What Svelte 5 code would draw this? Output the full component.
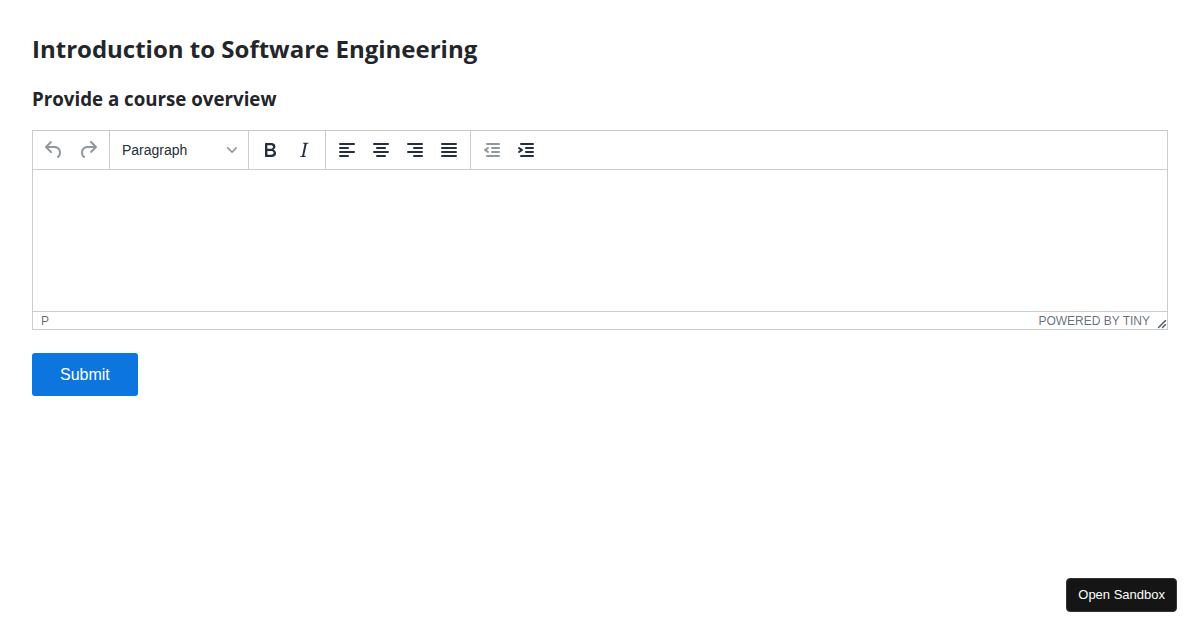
<script>
  const bar = (x, y, w) => `M${x} ${y}h${w}a1 1 0 0 1 0 2H${x}a1 1 0 1 1 0-2z`;
  const icons = {
    undo: 'M6.4 8H12c3.7 0 6.2 2 6.8 5.1.6 2.7-.4 5.6-2.3 6.8a1 1 0 0 1-1-1.8c1.1-.6 1.8-2.7 1.4-4.6-.5-2.1-2.1-3.5-4.9-3.5H6.4l3.3 3.3a1 1 0 1 1-1.4 1.4l-5-5a1 1 0 0 1 0-1.4l5-5a1 1 0 0 1 1.4 1.4L6.4 8z',
    redo: 'M17.6 10H12c-2.8 0-4.4 1.4-4.9 3.5-.4 2 .3 4 1.4 4.6a1 1 0 1 1-1 1.8c-2-1.2-2.9-4.1-2.3-6.8.6-3 3-5.1 6.8-5.1h5.6l-3.3-3.3a1 1 0 1 1 1.4-1.4l5 5a1 1 0 0 1 0 1.4l-5 5a1 1 0 0 1-1.4-1.4l3.3-3.3z',
    bold: 'M7.8 19c-.3 0-.5 0-.6-.2l-.2-.5V5.7c0-.2 0-.4.2-.5l.6-.2h5c1.5 0 2.7.3 3.5 1 .7.6 1.1 1.4 1.1 2.5a3 3 0 0 1-.6 1.9c-.4.6-1 1-1.6 1.2.4.1.9.3 1.3.6s.8.7 1 1.2c.4.4.5 1 .5 1.6 0 1.3-.4 2.3-1.3 3-.8.7-2.1 1-3.8 1H7.8zm5-8.3c.6 0 1.2-.1 1.6-.5.4-.3.6-.7.6-1.3 0-1.1-.8-1.7-2.3-1.7H9.3v3.5h3.4zm.5 6c.7 0 1.3-.1 1.7-.4.4-.4.6-.9.6-1.5s-.2-1-.7-1.4c-.4-.3-1-.4-2-.4H9.4v3.8h4z',
    italic: 'M16.7 4.7l-.1.9h-.3c-.6 0-1 0-1.4.3-.3.3-.4.6-.5 1.1l-2.1 9.8v.6c0 .5.4.8 1.4.8h.2l-.2.8H8l.2-.8h.2c1.1 0 1.8-.5 2-1.5l2-9.8.1-.5c0-.6-.4-.8-1.4-.8h-.3l.2-.9h5.8z',
    left: bar(5, 5, 14) + bar(5, 9, 8) + bar(5, 13, 14) + bar(5, 17, 8),
    center: bar(5, 5, 14) + bar(8, 9, 8) + bar(5, 13, 14) + bar(8, 17, 8),
    right: bar(5, 5, 14) + bar(11, 9, 8) + bar(5, 13, 14) + bar(11, 17, 8),
    justify: bar(5, 5, 14) + bar(5, 9, 14) + bar(5, 13, 14) + bar(5, 17, 14),
    outdent: bar(7, 5, 12) + bar(12, 9, 7) + bar(12, 13, 7) + bar(7, 17, 12) + 'M8.6 13.2a1 1 0 0 1-1.2 1.6l-3-2a1 1 0 0 1 0-1.6l3-2a1 1 0 0 1 1.2 1.6L6.8 12l1.8 1.2z',
    indent: bar(7, 5, 12) + bar(12, 9, 7) + bar(12, 13, 7) + bar(7, 17, 12) + 'M4.4 13.2L6.2 12l-1.8-1.2a1 1 0 0 1 1.2-1.6l3 2a1 1 0 0 1 0 1.6l-3 2a1 1 0 1 1-1.2-1.6z'
  };
  const history = [
    { icon: 'undo', label: 'Undo', disabled: true },
    { icon: 'redo', label: 'Redo', disabled: true }
  ];
  const groups = [
    [
      { icon: 'bold', label: 'Bold' },
      { icon: 'italic', label: 'Italic' }
    ],
    [
      { icon: 'left', label: 'Align left' },
      { icon: 'center', label: 'Align center' },
      { icon: 'right', label: 'Align right' },
      { icon: 'justify', label: 'Justify' }
    ],
    [
      { icon: 'outdent', label: 'Decrease indent', disabled: true },
      { icon: 'indent', label: 'Increase indent' }
    ]
  ];
  let block = $state('Paragraph');
  let content = $state('');
</script>

{#snippet tools(items)}
  <div class="group" role="group">
    {#each items as item}
      <button type="button" class="tool" aria-label={item.label} disabled={item.disabled}>
        <svg width="24" height="24" viewBox="0 0 24 24" aria-hidden="true">
          <path d={icons[item.icon]} fill-rule="evenodd" />
        </svg>
      </button>
    {/each}
  </div>
{/snippet}

<main>
  <h2>Introduction to Software Engineering</h2>
  <h3 id="overview-title">Provide a course overview</h3>
  <form onsubmit={(e) => e.preventDefault()}>
    <div class="editor">
      <div class="toolbar" role="toolbar" aria-label="Formatting">
        {@render tools(history)}
        <div class="group">
          <div class="picker">
            <select bind:value={block} aria-label="Block format">
              <option>Paragraph</option>
              <option>Heading 1</option>
              <option>Heading 2</option>
              <option>Heading 3</option>
            </select>
            <svg width="10" height="10" viewBox="0 0 10 10" aria-hidden="true">
              <path d="M8.7 2.2c.3-.3.8-.3 1 0 .4.4.4.9 0 1.2L5.7 7.8c-.3.3-.9.3-1.2 0L.2 3.4a.8.8 0 0 1 0-1.2c.3-.3.8-.3 1.1 0L5 6l3.7-3.8z" />
            </svg>
          </div>
        </div>
        {#each groups as group}
          {@render tools(group)}
        {/each}
      </div>
      <textarea bind:value={content} aria-labelledby="overview-title"></textarea>
      <div class="status">
        <span>P</span>
        <a href="#tiny">POWERED BY TINY</a>
        <svg width="10" height="10" viewBox="0 0 10 10" aria-hidden="true">
          <path d="M8.1 1.1A.5.5 0 1 1 9 2l-7 7A.5.5 0 1 1 1 8l7-7zM8.1 5.1A.5.5 0 1 1 9 6l-3 3A.5.5 0 1 1 5 8l3-3z" />
        </svg>
      </div>
    </div>
    <button type="submit" class="submit">Submit</button>
  </form>
</main>
<button type="button" class="sandbox">Open Sandbox</button>

<style>
  :global(body) {
    background: #fff;
  }
  main {
    padding: 32px;
    color: #222529;
    font-family: 'Open Sans', sans-serif;
  }
  h2,
  h3 {
    font-weight: 700;
  }
  h2 {
    margin: 0 0 18px;
    font-size: 24px;
    line-height: 34px;
  }
  h3 {
    margin: 0 0 16px;
    line-height: 30px;
  }
  button,
  select,
  textarea {
    margin: 0;
    border: 0;
    font-family: 'Liberation Sans', Arial, sans-serif;
  }
  .editor {
    display: flex;
    flex-direction: column;
    border: 1px solid #ccc;
  }
  .toolbar {
    display: flex;
    flex-wrap: wrap;
    border-bottom: 1px solid #ccc;
  }
  .group {
    display: flex;
    align-items: center;
    height: 38px;
    padding: 0 4px;
    border-right: 1px solid #ccc;
  }
  .group:last-child {
    border-right: 0;
  }
  .tool {
    display: flex;
    align-items: center;
    justify-content: center;
    width: 34px;
    height: 34px;
    padding: 0;
    background: none;
    fill: #222f3e;
  }
  .tool:disabled {
    fill: rgba(34, 47, 62, 0.5);
  }
  .picker {
    display: grid;
    align-items: center;
    width: 130px;
  }
  .picker > * {
    grid-area: 1 / 1;
  }
  .picker svg {
    justify-self: end;
    margin-right: 7px;
    fill: rgba(34, 47, 62, 0.5);
    pointer-events: none;
  }
  select {
    width: 100%;
    height: 34px;
    padding: 0 8px;
    appearance: none;
    background: none;
    color: #222f3e;
    font-size: 14px;
  }
  textarea {
    display: block;
    height: 141px;
    padding: 16px;
    box-sizing: border-box;
    outline: none;
    resize: none;
    font-size: 16px;
  }
  .status {
    display: flex;
    align-items: center;
    height: 17px;
    padding-left: 8px;
    border-top: 1px solid #ccc;
    color: rgba(34, 47, 62, 0.7);
    font: 12px/16px 'Liberation Sans', Arial, sans-serif;
  }
  .status a {
    margin-left: auto;
    color: inherit;
    text-decoration: none;
  }
  .status svg {
    align-self: flex-end;
    margin-left: 7px;
    fill: rgba(34, 47, 62, 0.8);
  }
  .submit {
    display: block;
    margin-top: 23px;
    padding: 0 28px;
    height: 43px;
    border-radius: 3px;
    background: #0c75de;
    color: #fff;
    font-size: 16px;
  }
  .sandbox {
    position: fixed;
    right: 23px;
    bottom: 18px;
    height: 34px;
    padding: 0 11px 2px;
    border: 1px solid #343434;
    border-radius: 4px;
    background: #151515;
    color: #fff;
    font-size: 13px;
  }
</style>
